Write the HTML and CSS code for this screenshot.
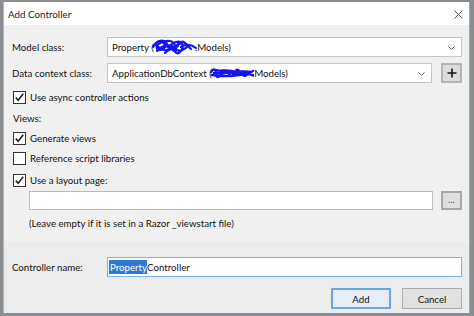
FILE: index.html
```html
<!DOCTYPE html>
<html>
<head>
<meta charset="utf-8">
<link rel="stylesheet" href="styles.css">
</head>
<body>
<div class="dialog">
  <div class="titlebar">
    <span class="title">Add Controller</span>
    <svg class="close" width="9" height="9" viewBox="0 0 9 9"><path d="M0.5 0.5L8.5 8.5M8.5 0.5L0.5 8.5" stroke="#444" stroke-width="0.9" fill="none"/></svg>
  </div>
  <div class="content">
    <div class="field-row">
      <span class="label">Model class:</span>
      <div class="combo wide">
        <span class="combo-text">Property (<span class="scrib s1"><svg width="47" height="18" viewBox="0 0 47 18"><path d="M2 9C5 3 11 1 15 4S9 15 6 11 13 2 19 3 27 15 23 13 17 6 25 4 33 10 29 14 21 12 27 6 35 7 40 11M4 6C10 12 16 15 21 9M11 3C16 10 22 13 27 8M6 13C12 6 20 5 26 12 31 15 35 9 38 8M14 15C18 11 24 9 30 5M30 9C34 6 40 6 45 10" stroke="#1414ee" stroke-width="2.2" fill="none" stroke-linecap="round"/></svg></span>.Models)</span>
        <svg class="arrow" width="7" height="4" viewBox="0 0 7 4"><path d="M0.5 0.5L3.5 3.5L6.5 0.5" stroke="#606060" fill="none"/></svg>
      </div>
    </div>
    <div class="field-row second">
      <span class="label">Data context class:</span>
      <div class="combo narrow">
        <span class="combo-text">ApplicationDbContext (<span class="scrib s2"><svg width="46" height="14" viewBox="0 0 46 14"><path d="M2 6C4 2 8 3 7 8S12 11 14 7 18 4 20 8 24 10 26 6 30 4 33 8 36 9 44 5M3 9C10 10 20 11 30 9S38 8 44 9M8 4C12 6 16 3 22 5 28 7 34 4 42 6M5 7L40 7" stroke="#1414ee" stroke-width="2.4" fill="none" stroke-linecap="round"/></svg></span>.Models)</span>
        <svg class="arrow" width="7" height="4" viewBox="0 0 7 4"><path d="M0.5 0.5L3.5 3.5L6.5 0.5" stroke="#606060" fill="none"/></svg>
      </div>
      <div class="btn-square plus">
        <svg width="10" height="10" viewBox="0 0 10 10"><path d="M5 0.5V9.5M0.5 5H9.5" stroke="#111" stroke-width="1.6"/></svg>
      </div>
    </div>
    <div class="check-row async">
      <span class="checkbox checked"><svg width="11" height="11" viewBox="0 0 11 11"><path d="M1.8 5.6L4.2 8.2L9.2 1.8" stroke="#222" stroke-width="1.6" fill="none"/></svg></span>
      <span>Use async controller actions</span>
    </div>
    <div class="text-row">Views:</div>
    <div class="check-row">
      <span class="checkbox checked"><svg width="11" height="11" viewBox="0 0 11 11"><path d="M1.8 5.6L4.2 8.2L9.2 1.8" stroke="#222" stroke-width="1.6" fill="none"/></svg></span>
      <span>Generate views</span>
    </div>
    <div class="check-row">
      <span class="checkbox"></span>
      <span>Reference script libraries</span>
    </div>
    <div class="check-row layout">
      <span class="checkbox checked"><svg width="11" height="11" viewBox="0 0 11 11"><path d="M1.8 5.6L4.2 8.2L9.2 1.8" stroke="#222" stroke-width="1.6" fill="none"/></svg></span>
      <span>Use a layout page:</span>
    </div>
    <div class="layout-row">
      <div class="textbox layout-input"></div>
      <div class="btn-square dots">...</div>
    </div>
    <div class="help-row">(Leave empty if it is set in a Razor _viewstart file)</div>
  </div>
  <div class="footer">
    <div class="field-row">
      <span class="label">Controller name:</span>
      <div class="textbox focused"><span class="sel">Property</span>Controller</div>
    </div>
    <div class="buttons">
      <div class="btn default">Add</div>
      <div class="btn">Cancel</div>
    </div>
  </div>
</div>
</body>
</html>
```
FILE: styles.css
```css
html, body {
  margin: 0;
  padding: 0;
}
body {
  width: 474px;
  height: 316px;
  background: #8a8d92;
  font-family: Lato, "Open Sans", sans-serif;
  font-size: 9.7px;
  color: #111;
  overflow: hidden;
}
.dialog {
  margin: 2px 3px 0 3px;
  width: 467px;
  height: 311px;
  background: #f0f0f0;
  border-left: 1px solid #b5b5b5;
  border-right: 1px solid #a8a8a8;
  box-sizing: border-box;
  display: flex;
  flex-direction: column;
}
.titlebar {
  height: 23px;
  background: #ffffff;
  display: flex;
  align-items: center;
  justify-content: space-between;
  padding: 0 6px 0 4px;
  flex-shrink: 0;
}
.title {
  font-size: 9.8px;
  color: #222;
}
.close {
  margin-top: 1px;
}
.content {
  padding: 12px 7px 0 8px;
  height: 217px;
  box-sizing: border-box;
  flex-shrink: 0;
}
.field-row {
  display: flex;
  align-items: center;
  height: 20px;
}
.field-row.second {
  margin-top: 6px;
}
.label {
  width: 95px;
  flex-shrink: 0;
  white-space: nowrap;
}
.combo {
  position: relative;
  height: 20px;
  box-sizing: border-box;
  border: 1px solid #c5c5c5;
  background: #fff;
  display: flex;
  align-items: center;
  padding-left: 4px;
}
.combo.wide {
  flex: 1;
}
.combo.narrow {
  width: 326px;
}
.combo-text {
  display: flex;
  align-items: center;
  white-space: nowrap;
}
.scrib {
  display: inline-flex;
  margin: 0 -3px 0 -3px;
}
.arrow {
  position: absolute;
  right: 6px;
  top: 8px;
}
.btn-square {
  width: 21px;
  height: 20px;
  box-sizing: border-box;
  border: 1px solid #adadad;
  background: #e1e1e1;
  display: flex;
  align-items: center;
  justify-content: center;
}
.plus {
  margin-left: 9px;
  border: 2px solid #b4b4b4;
  background: #dcdcdc;
}
.check-row {
  display: flex;
  align-items: center;
  height: 20px;
}
.check-row.async {
  margin-top: 4px;
}
.check-row.layout {
  margin-top: 2px;
}
.checkbox {
  width: 13px;
  height: 13px;
  box-sizing: border-box;
  border: 1px solid #333;
  background: #fff;
  margin: 0 4px 0 1px;
  display: flex;
  align-items: center;
  justify-content: center;
  flex-shrink: 0;
}
.text-row {
  height: 21px;
  display: flex;
  align-items: center;
  padding-left: 1px;
}
.layout-row {
  display: flex;
  align-items: center;
  margin-top: 1px;
  padding-left: 17px;
  height: 19px;
}
.textbox {
  height: 19px;
  box-sizing: border-box;
  border: 1px solid #bcbcbc;
  background: #fff;
}
.layout-input {
  width: 405px;
}
.dots {
  margin-left: 8px;
  height: 19px;
  border: 2px solid #a8a8a8;
  background: #dedede;
  font-size: 9px;
  color: #555;
  line-height: 1;
  align-items: flex-end;
  padding-bottom: 4px;
}
.help-row {
  height: 20px;
  display: flex;
  align-items: center;
  padding-left: 17px;
  margin-top: 3px;
}
.footer {
  flex: 1;
  background: #ececec;
  padding: 15px 7px 0 8px;
}
.footer .textbox {
  flex: 1;
  height: 20px;
  border-color: #7fb1e6;
  display: flex;
  align-items: center;
  padding-left: 1px;
  color: #111;
}
.sel {
  background: #2b7ad6;
  color: #fff;
  padding: 1px 0 1px 1px;
}
.buttons {
  display: flex;
  justify-content: flex-end;
  gap: 11px;
  margin-top: 11px;
}
.btn {
  width: 60px;
  height: 21px;
  box-sizing: border-box;
  border: 1px solid #adadad;
  background: #e1e1e1;
  display: flex;
  align-items: center;
  justify-content: center;
}
.btn.default {
  border: 2px solid #6aa6e2;
  background: #e5eef7;
}
```
